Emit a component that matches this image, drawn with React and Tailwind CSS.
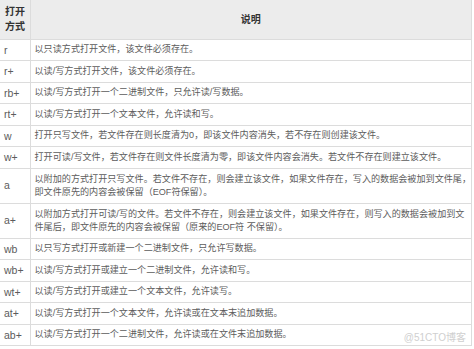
const rows = [
  { mode: "r", text: ["以只读方式打开文件，该文件必须存在。"] },
  { mode: "r+", text: ["以读/写方式打开文件，该文件必须存在。"] },
  { mode: "rb+", text: ["以读/写方式打开一个二进制文件，只允许读/写数据。"] },
  { mode: "rt+", text: ["以读/写方式打开一个文本文件，允许读和写。"] },
  { mode: "w", text: ["打开只写文件，若文件存在则长度清为0，即该文件内容消失，若不存在则创建该文件。"] },
  { mode: "w+", text: ["打开可读/写文件，若文件存在则文件长度清为零，即该文件内容会消失。若文件不存在则建立该文件。"] },
  {
    mode: "a",
    text: [
      "以附加的方式打开只写文件。若文件不存在，则会建立该文件，如果文件存在，写入的数据会被加到文件尾，",
      "即文件原先的内容会被保留（EOF符保留）。",
    ],
  },
  {
    mode: "a+",
    text: [
      "以附加方式打开可读/写的文件。若文件不存在，则会建立该文件，如果文件存在，则写入的数据会被加到文",
      "件尾后，即文件原先的内容会被保留（原来的EOF符 不保留）。",
    ],
  },
  { mode: "wb", text: ["以只写方式打开或新建一个二进制文件，只允许写数据。"] },
  { mode: "wb+", text: ["以读/写方式打开或建立一个二进制文件，允许读和写。"] },
  { mode: "wt+", text: ["以读/写方式打开或建立一个文本文件，允许读写。"] },
  { mode: "at+", text: ["以读/写方式打开一个文本文件，允许读或在文本末追加数据。"] },
  { mode: "ab+", text: ["以读/写方式打开一个二进制文件，允许读或在文件末追加数据。"] },
];

export default function App() {
  return (
    <div
      className="relative w-[474px] h-[349px] bg-white overflow-hidden"
      style={{ fontFamily: '"Liberation Sans", "Noto Sans CJK SC", sans-serif' }}
    >
      <table className="w-[472px] border-collapse table-fixed">
        <colgroup>
          <col className="w-[30px]" />
          <col />
        </colgroup>
        <thead>
          <tr className="h-[39px] bg-[#ececec] text-[#333] font-bold text-[10px] leading-[15px]">
            <th className="border-r border-b border-[#dcdcdc] text-left pl-[5px]">
              打开
              <br />
              方式
            </th>
            <th className="border-r border-b border-[#dcdcdc] text-center">说明</th>
          </tr>
        </thead>
        <tbody className="text-[#5c5c5c]">
          {rows.map((row) => (
            <tr
              key={row.mode}
              className={row.text.length > 1 ? "h-[35px]" : "h-[21.5px]"}
            >
              <td className="border-r border-b border-[#dcdcdc] pl-[4px] text-[10.5px] leading-none">
                {row.mode}
              </td>
              <td className="border-r border-b border-[#dcdcdc] pl-[4px] text-[9.1px] leading-[13px] whitespace-nowrap">
                {row.text.map((line, i) => (
                  <div key={i}>{line}</div>
                ))}
              </td>
            </tr>
          ))}
        </tbody>
      </table>
      <div className="absolute right-[8px] top-[330px] text-[10px] text-[#cfcfcf]">
        @51CTO博客
      </div>
    </div>
  );
}
